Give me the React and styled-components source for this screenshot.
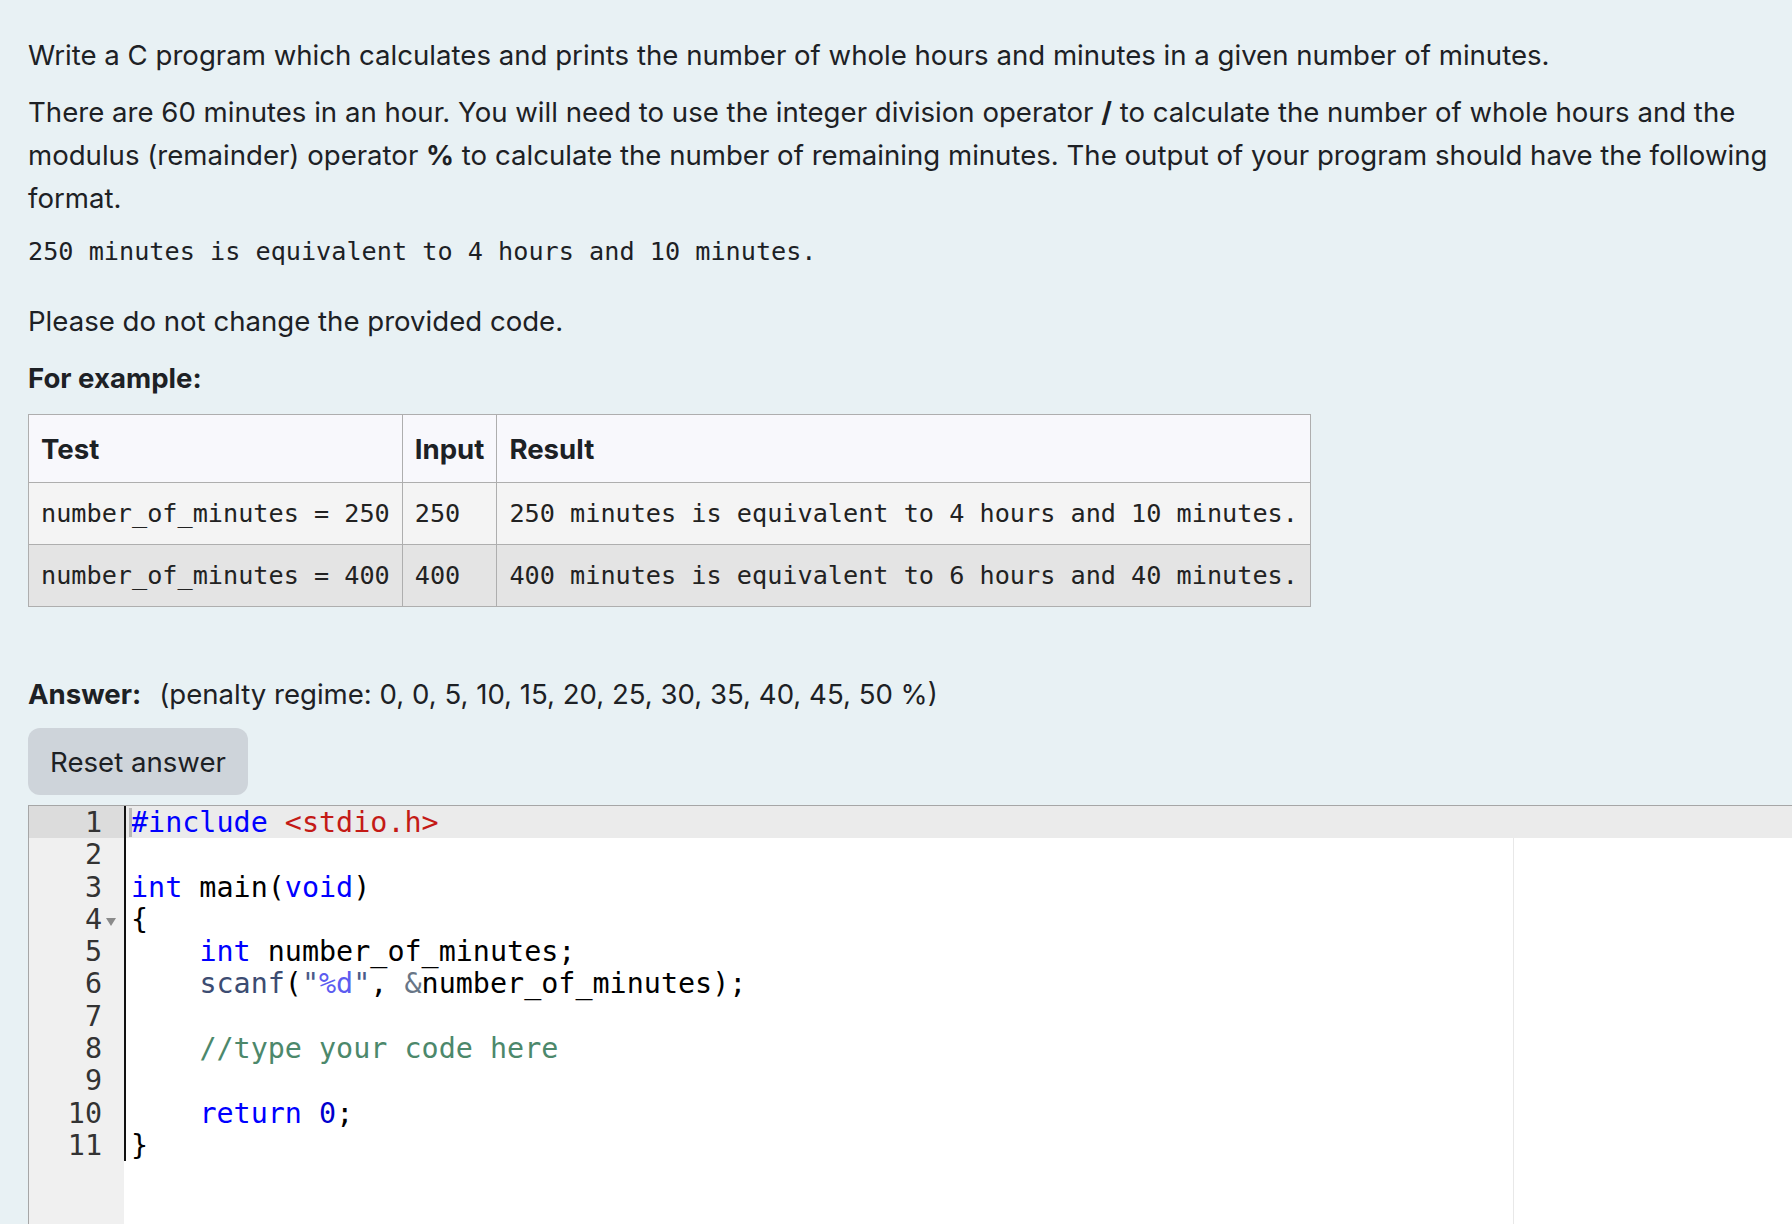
import React from 'react';
import styled, { createGlobalStyle } from 'styled-components';

const GlobalStyle = createGlobalStyle`
  html, body {
    margin: 0;
    padding: 0;
    background: #e8f1f4;
  }
  body {
    font-family: Inter, "Open Sans", sans-serif;
    color: #1d2125;
  }
`;

const Page = styled.div`
  padding: 34px 20px 0 28px;
  min-height: 1224px;
  box-sizing: border-box;
  overflow: hidden;
`;

const Para = styled.p`
  margin: 0 0 ${props => props.$gap || 14}px 0;
  font-size: 27.6px;
  line-height: 43px;
`;

const Op = styled.strong`
  font-weight: 700;
`;

const Sample = styled.pre`
  margin: 3px 0 30px 0;
  font-family: "DejaVu Sans Mono", monospace;
  font-size: 25.2px;
  line-height: 36px;
  color: #1d2125;
`;

const Heading = styled.div`
  font-size: 27.6px;
  line-height: 43px;
  font-weight: 700;
  margin-bottom: ${props => props.$gap || 0}px;
`;

const Table = styled.table`
  border-collapse: collapse;
`;

const HeadCell = styled.th`
  background: #f8f8fc;
  border: 1px solid #aeaeae;
  text-align: left;
  font-weight: 700;
  font-size: 27.6px;
  height: 68px;
  padding: 0 12px;
  box-sizing: border-box;
`;

const Row = styled.tr`
  background: ${props => (props.$odd ? '#e4e4e4' : '#f4f4f4')};
`;

const Cell = styled.td`
  border: 1px solid #aeaeae;
  font-family: "DejaVu Sans Mono", monospace;
  font-size: 25.2px;
  color: #222;
  height: 62px;
  padding: 0 12px;
  white-space: pre;
  box-sizing: border-box;
`;

const AnswerLine = styled.div`
  margin-top: 66px;
  display: flex;
  align-items: center;
  gap: 18px;
  font-size: 27.6px;
  line-height: 43px;
`;

const Bold = styled.span`
  font-weight: 700;
`;

const ResetButton = styled.button`
  margin-top: 12px;
  width: 220px;
  height: 67px;
  border: none;
  border-radius: 12px;
  background: #ced4da;
  color: #1d2125;
  font-family: Inter, sans-serif;
  font-size: 27.6px;
  cursor: pointer;
  display: block;
`;

const Editor = styled.div`
  margin: 10px -20px 0 0;
  display: flex;
  border-top: 1px solid #a6a6a6;
  border-left: 1px solid #a6a6a6;
  background: #fff;
  min-height: 440px;
  position: relative;
  font-family: "DejaVu Sans Mono", monospace;
  font-size: 28.4px;
`;

const Gutter = styled.div`
  width: 95px;
  flex-shrink: 0;
  background: #f0f0f0;
  color: #333;
`;

const GutterCell = styled.div`
  height: 32.3px;
  line-height: 34px;
  text-align: right;
  padding-right: 22px;
  position: relative;
  background: ${props => (props.$active ? '#dcdcdc' : 'transparent')};
`;

const Fold = styled.span`
  position: absolute;
  right: 8px;
  top: 15px;
  width: 0;
  height: 0;
  border-left: 5px solid transparent;
  border-right: 5px solid transparent;
  border-top: 8px solid #8a8a8a;
`;

const Content = styled.div`
  flex: 1;
  position: relative;
`;

const Lines = styled.div`
  border-left: 2px solid #111;
`;

const Line = styled.div`
  height: 32.3px;
  line-height: 34px;
  padding-left: 5px;
  white-space: pre;
  color: #000;
  position: relative;
  background: ${props => (props.$active ? '#ebebeb' : 'transparent')};
`;

const Cursor = styled.span`
  position: absolute;
  left: 3px;
  top: 2px;
  width: 3px;
  height: 29px;
  background: #b8b8b8;
`;

const PrintMargin = styled.div`
  position: absolute;
  top: 0;
  bottom: 0;
  left: 1389px;
  width: 1px;
  background: #e8e8e8;
`;

const Tok = styled.span`
  color: ${props => props.$c};
`;

const KW = '#0000ff';
const FN = '#3c4c72';
const STR = '#4a5b8a';
const FMT = '#5c5cf0';
const OPR = '#687687';
const CMT = '#4c886b';
const INC = '#c41a16';
const NUM = '#0000cd';

const code = [
  [[KW, '#include'], [null, ' '], [INC, '<stdio.h>']],
  [],
  [[KW, 'int'], [null, ' main('], [KW, 'void'], [null, ')']],
  [[null, '{']],
  [[null, '    '], [KW, 'int'], [null, ' number_of_minutes;']],
  [[null, '    '], [FN, 'scanf'], [null, '('], [STR, '"'], [FMT, '%d'], [STR, '"'], [null, ', '], [OPR, '&'], [null, 'number_of_minutes);']],
  [],
  [[null, '    '], [CMT, '//type your code here']],
  [],
  [[null, '    '], [KW, 'return'], [null, ' '], [NUM, '0'], [null, ';']],
  [[null, '}']],
];

const tests = [
  { test: 'number_of_minutes = 250', input: '250', result: '250 minutes is equivalent to 4 hours and 10 minutes.' },
  { test: 'number_of_minutes = 400', input: '400', result: '400 minutes is equivalent to 6 hours and 40 minutes.' },
];

export default function App() {
  return (
    <>
      <GlobalStyle />
      <Page>
        <Para>
          Write a C program which calculates and prints the number of whole hours and minutes in a given number of minutes.
        </Para>
        <Para>
          There are 60 minutes in an hour. You will need to use the integer division operator <Op>/</Op> to calculate the number of whole hours and the modulus (remainder) operator <Op>%</Op> to calculate the number of remaining minutes. The output of your program should have the following format.
        </Para>
        <Sample>250 minutes is equivalent to 4 hours and 10 minutes.</Sample>
        <Para>Please do not change the provided code.</Para>
        <Heading $gap={14}>For example:</Heading>
        <Table>
          <thead>
            <tr>
              <HeadCell>Test</HeadCell>
              <HeadCell>Input</HeadCell>
              <HeadCell>Result</HeadCell>
            </tr>
          </thead>
          <tbody>
            {tests.map((t, i) => (
              <Row key={t.input} $odd={i % 2 === 1}>
                <Cell>{t.test}</Cell>
                <Cell>{t.input}</Cell>
                <Cell>{t.result}</Cell>
              </Row>
            ))}
          </tbody>
        </Table>
        <AnswerLine>
          <Bold>Answer:</Bold>
          <span>(penalty regime: 0, 0, 5, 10, 15, 20, 25, 30, 35, 40, 45, 50 %)</span>
        </AnswerLine>
        <ResetButton>Reset answer</ResetButton>
        <Editor>
          <Gutter>
            {code.map((_, i) => (
              <GutterCell key={i} $active={i === 0}>
                {i + 1}
                {i === 3 && <Fold />}
              </GutterCell>
            ))}
          </Gutter>
          <Content>
            <PrintMargin />
            <Lines>
              {code.map((toks, i) => (
                <Line key={i} $active={i === 0}>
                  {i === 0 && <Cursor />}
                  {toks.map(([c, s], j) =>
                    c ? <Tok key={j} $c={c}>{s}</Tok> : <React.Fragment key={j}>{s}</React.Fragment>
                  )}
                </Line>
              ))}
            </Lines>
          </Content>
        </Editor>
      </Page>
    </>
  );
}
